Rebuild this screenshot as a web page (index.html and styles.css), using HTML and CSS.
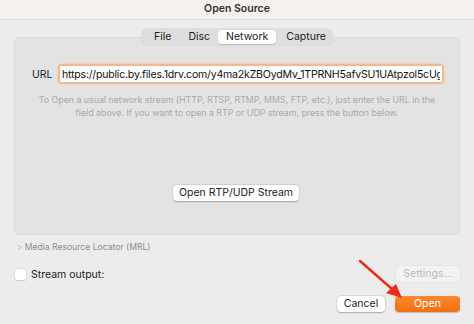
FILE: index.html
```html
<!DOCTYPE html>
<html>
<head>
<meta charset="utf-8">
<link rel="stylesheet" href="styles.css">
</head>
<body>
<div class="window">
  <div class="titlebar">Open Source</div>
  <div class="content">
    <div class="tabs">
      <span class="tab">File</span>
      <span class="sep"></span>
      <span class="tab">Disc</span>
      <span class="tab active">Network</span>
      <span class="tab">Capture</span>
    </div>
    <div class="panel">
      <div class="url-row">
        <label class="url-label">URL</label>
        <input class="url-input" type="text" readonly value="https://public.by.files.1drv.com/y4ma2kZBOydMv_1TPRNH5afvSU1UAtpzol5cUgdEfx">
      </div>
      <p class="help">To Open a usual network stream (HTTP, RTSP, RTMP, MMS, FTP, etc.), just enter the URL in the<br>field above. If you want to open a RTP or UDP stream, press the button below.</p>
      <div class="rtp-row">
        <button class="btn">Open RTP/UDP Stream</button>
      </div>
    </div>
    <div class="mrl"><span class="chev">&gt;</span> Media Resource Locator (MRL)</div>
    <div class="stream-row">
      <span class="checkbox"></span>
      <span class="stream-label">Stream output:</span>
      <button class="btn settings" disabled>Settings...</button>
    </div>
    <div class="actions">
      <button class="btn cancel">Cancel</button>
      <button class="btn primary">Open</button>
    </div>
  </div>
  <svg class="arrow" width="60" height="50" viewBox="0 0 60 50">
    <line x1="4" y1="4" x2="36" y2="32" stroke="#ee2a1b" stroke-width="2.4" stroke-linecap="round"/>
    <polygon points="46,41 30,36 40,27" fill="#ee2a1b"/>
  </svg>
</div>
</body>
</html>
```
FILE: styles.css
```css
* { box-sizing: border-box; }
html, body { margin: 0; padding: 0; }
body {
  width: 474px;
  height: 324px;
  overflow: hidden;
  background: #ececec;
  font-family: Inter, "Noto Sans", "Liberation Sans", sans-serif;
  color: #222;
}
.window {
  position: relative;
  width: 474px;
  height: 324px;
  background: #ececec;
}
.titlebar {
  height: 20px;
  background: #f6f1ee;
  border-bottom: 1px solid #dcd8d4;
  text-align: center;
  font-size: 10.5px;
  font-weight: 600;
  line-height: 18px;
  color: #333;
}
.content {
  padding: 9px 14px 0 14px;
}
.tabs {
  display: flex;
  align-items: center;
  width: 190px;
  height: 16px;
  margin: 0 auto -8px auto;
  padding: 0 2px;
  background: #dedede;
  border-radius: 5px;
  position: relative;
  z-index: 1;
  box-shadow: 0 0 0 0.5px #d2d2d2;
}
.tab {
  font-size: 10.5px;
  line-height: 14px;
  color: #222;
  padding: 0 8px;
  height: 14px;
  border-radius: 4px;
}
.tab:first-child { padding: 0 9px 0 10px; }
.tab.active {
  background: #fff;
  padding: 0 8px;
  box-shadow: 0 0.5px 1px rgba(0,0,0,0.15);
}
.tab:last-child { padding: 0 8px 0 10px; }
.sep {
  width: 1px;
  height: 10px;
  background: #c8c8c8;
}
.panel {
  height: 198px;
  background: #e3e3e3;
  border-radius: 5px;
  border: 1px solid #dddddd;
  padding-top: 26px;
}
.url-row {
  display: flex;
  align-items: center;
  padding-left: 17px;
}
.url-label {
  font-size: 10.5px;
  color: #222;
  width: 26px;
}
.url-input {
  width: 386px;
  height: 20px;
  border: 2px solid #f2b893;
  outline: 1px solid #f7d3bb;
  border-radius: 3px;
  background: #fff;
  font-family: Inter, "Noto Sans", "Liberation Sans", sans-serif;
  font-size: 10.6px;
  color: #111;
  padding: 0 2px;
  letter-spacing: -0.22px;
}
.help {
  margin: 9px auto 0 auto;
  width: 420px;
  text-align: center;
  font-size: 8.8px;
  line-height: 13px;
  color: #a9a9a9;
  white-space: nowrap;
}
.rtp-row {
  display: flex;
  justify-content: center;
  margin-top: 66px;
  padding-right: 2px;
}
.btn {
  font-family: Inter, "Noto Sans", "Liberation Sans", sans-serif;
  font-size: 10.5px;
  color: #222;
  background: #fff;
  border: none;
  border-radius: 4px;
  box-shadow: 0 0.5px 1.5px rgba(0,0,0,0.25), 0 0 0 0.5px rgba(0,0,0,0.08);
  height: 16px;
  padding: 0;
  line-height: 16px;
  white-space: nowrap;
}
.rtp-row .btn { width: 126px; }
.mrl {
  margin-top: 6px;
  padding-left: 3px;
  font-size: 8.6px;
  color: #8d8d8d;
  height: 12px;
  line-height: 12px;
}
.chev { color: #b5b5b5; font-size: 8px; }
.stream-row {
  display: flex;
  align-items: center;
  margin-top: 13px;
  height: 16px;
}
.checkbox {
  width: 11px;
  height: 11px;
  background: #fff;
  border-radius: 3px;
  box-shadow: 0 0 0 0.5px #cfcfcf, 0 0.5px 1px rgba(0,0,0,0.15);
  margin-left: 1px;
}
.stream-label {
  font-size: 10.5px;
  margin-left: 5px;
  color: #222;
}
.settings {
  margin-left: auto;
  width: 64px;
  color: #b9b9b9;
  background: #f3f3f3;
  box-shadow: 0 0 0 0.5px #dedede;
}
.actions {
  display: flex;
  justify-content: flex-end;
  gap: 10px;
  margin-top: 14px;
}
.cancel { width: 48px; }
.primary {
  width: 65px;
  background: linear-gradient(#fb8a2e, #f26f10);
  color: #fff;
  box-shadow: 0 0.5px 1px rgba(0,0,0,0.2);
}
.arrow {
  position: absolute;
  left: 356px;
  top: 257px;
}
```
